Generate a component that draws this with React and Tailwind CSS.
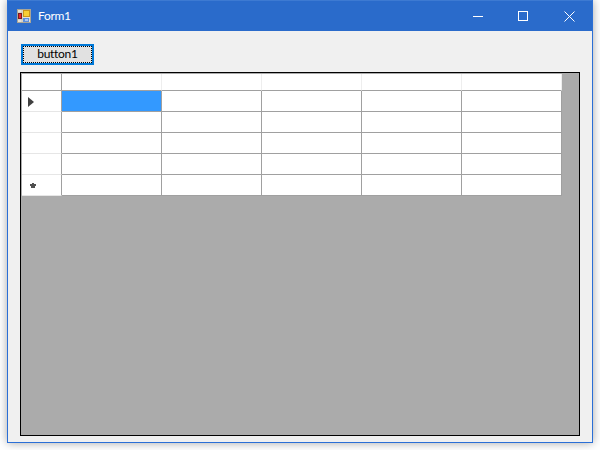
const rows = [0, 1, 2, 3, 4];
const cols = [0, 1, 2, 3, 4];

function AppIcon() {
    return (
        <svg width="14" height="14" viewBox="0 0 14 14" className="shrink-0">
            <rect x="0" y="0" width="14" height="14" fill="#a9a597" />
            <rect x="1" y="1" width="12" height="12" fill="#e6e2d6" />
            <path d="M5 0V14M0 4H5M0 10H14" stroke="#a9a597" strokeWidth="0.5" />
            <rect x="6" y="1" width="7" height="7" fill="#c9961c" />
            <rect x="7" y="2" width="5" height="5" fill="#f8cf35" />
            <rect x="1" y="4" width="4" height="6" fill="#7a1c20" />
            <rect x="2" y="5" width="2" height="4" fill="#e8282e" />
            <rect x="6" y="9" width="6" height="4" fill="#5b8fe0" />
            <rect x="8" y="10" width="3" height="2" fill="#a9c6f2" />
        </svg>
    );
}

function RowHeader({ idx }) {
    return (
        <div className="h-[21px] border-r border-b border-r-[#a0a0a0] border-b-[#e6e6e6] bg-white flex items-center pl-[6px]">
            {idx === 0 && (
                <svg width="6" height="10" viewBox="0 0 6 10" className="mt-[2px]">
                    <path d="M0 0L6 5L0 10Z" fill="#404040" />
                </svg>
            )}
            {idx === 4 && (
                <svg width="6" height="6" viewBox="0 0 6 6" className="ml-[2px] mt-[1px]">
                    <path d="M2 0H4V1H6V3H5V5H1V3H0V1H2Z" fill="#505050" />
                </svg>
            )}
        </div>
    );
}

export default function App() {
    return (
        <div className="w-[600px] h-[450px] bg-white overflow-hidden px-[7px]">
            <div className="w-[586px] h-[443px] flex flex-col bg-[#f0f0f0] border border-t-0 border-[#2b6fd6] shadow-[0_0_9px_rgba(0,0,0,0.35)]">
                <div className="h-[31px] shrink-0 bg-[#2a6bcb] border-t border-[#3d7ad2] flex items-center text-white font-['Lato',sans-serif] text-[12px]">
                    <div className="ml-[9px] mr-[7px]"><AppIcon /></div>
                    <span className="tracking-[-0.3px]">Form1</span>
                    <div className="ml-auto flex h-full items-center text-white">
                        <button className="w-[45px] h-full flex items-center justify-center">
                            <svg width="11" height="11" viewBox="0 0 11 11"><path d="M0 5.5H10" stroke="#fff" strokeWidth="1" /></svg>
                        </button>
                        <button className="w-[45px] h-full flex items-center justify-center">
                            <svg width="11" height="11" viewBox="0 0 11 11"><rect x="0.5" y="0.5" width="9" height="9" fill="none" stroke="#fff" strokeWidth="1" /></svg>
                        </button>
                        <button className="w-[46px] h-full flex items-center justify-center">
                            <svg width="11" height="11" viewBox="0 0 11 11"><path d="M0.5 0.5L10.5 10.5M10.5 0.5L0.5 10.5" stroke="#fff" strokeWidth="1" /></svg>
                        </button>
                    </div>
                </div>
                <div className="flex-1 flex flex-col pt-[13px] px-[12px] pb-[6px]">
                    <button className="ml-[1px] w-[73px] h-[21px] border-2 border-[#0078d7] bg-[#e1e1e1] p-0 text-black font-['Lato',sans-serif] text-[12px] leading-none">
                        <span className="w-full h-full flex items-center justify-center border border-dotted border-black pb-[2px] tracking-[-0.3px]">button1</span>
                    </button>
                    <div className="mt-[7px] flex-1 border border-black bg-[#ababab] pt-[1px] pl-[1px]">
                        <div className="grid grid-cols-[40px_repeat(5,100px)] w-[540px]">
                            <div className="h-[17px] bg-white border-r border-b border-r-[#a0a0a0] border-b-[#a0a0a0]" />
                            {cols.map((c) => (
                                <div key={c} className="h-[17px] bg-white border-r border-b border-r-[#eeeeee] border-b-[#a0a0a0]" />
                            ))}
                            {rows.map((r) => (
                                <div key={r} className="contents">
                                    <RowHeader idx={r} />
                                    {cols.map((c) => (
                                        <div key={c} className={r === 0 && c === 0 ? "h-[21px] bg-[#3399ff] border-r border-b border-[#a0a0a0]" : "h-[21px] bg-white border-r border-b border-[#a0a0a0]"} />
                                    ))}
                                </div>
                            ))}
                        </div>
                    </div>
                </div>
            </div>
        </div>
    );
}
